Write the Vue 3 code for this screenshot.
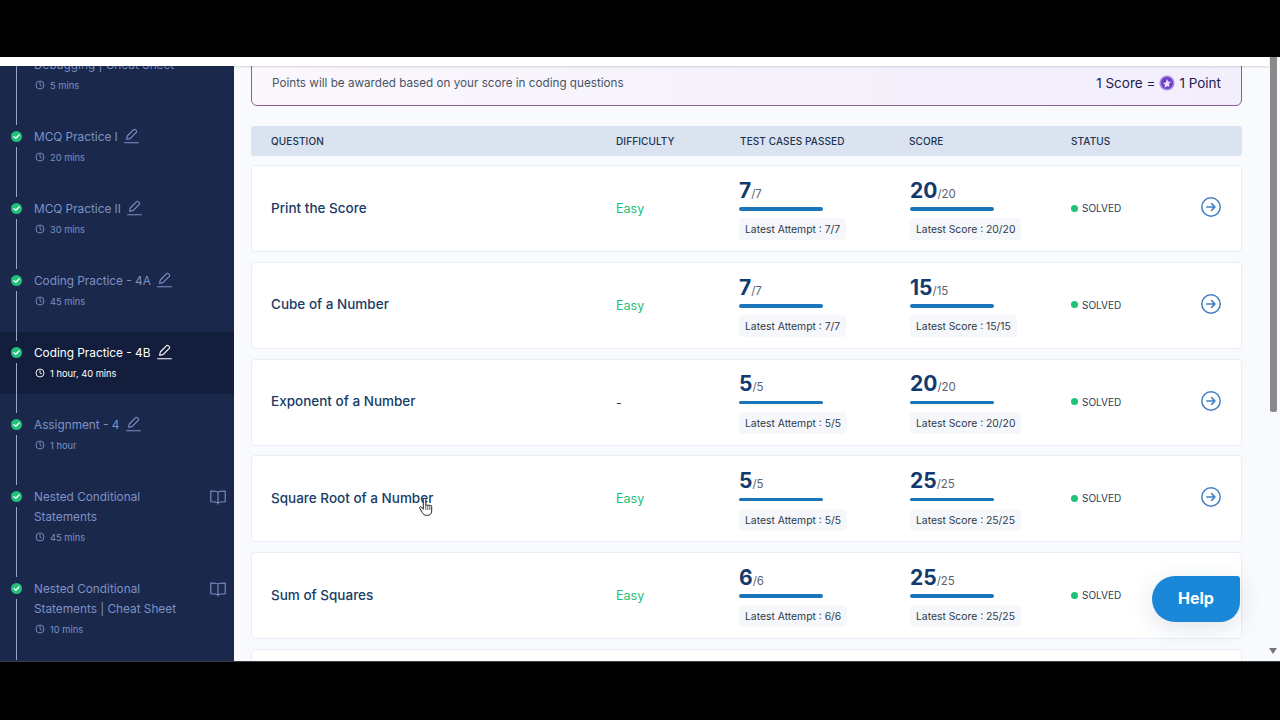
<script setup>
const lessons = [
  { title: 'Debugging | Cheat Sheet', time: '5 mins', icon: 'none' },
  { title: 'MCQ Practice I', time: '20 mins', icon: 'pen' },
  { title: 'MCQ Practice II', time: '30 mins', icon: 'pen' },
  { title: 'Coding Practice - 4A', time: '45 mins', icon: 'pen' },
  { title: 'Coding Practice - 4B', time: '1 hour, 40 mins', icon: 'pen', active: true },
  { title: 'Assignment - 4', time: '1 hour', icon: 'pen' },
  { title: 'Nested Conditional Statements', time: '45 mins', icon: 'book', tall: true },
  { title: 'Nested Conditional Statements | Cheat Sheet', time: '10 mins', icon: 'book', tall: true }
]
const rows = [
  { name: 'Print the Score', diff: 'Easy', tests: 7, score: 20 },
  { name: 'Cube of a Number', diff: 'Easy', tests: 7, score: 15 },
  { name: 'Exponent of a Number', diff: '-', tests: 5, score: 20 },
  { name: 'Square Root of a Number', diff: 'Easy', tests: 5, score: 25 },
  { name: 'Sum of Squares', diff: 'Easy', tests: 6, score: 25 }
]
</script>

<template>
  <div class="page">
    <div class="black top"></div>
    <div class="middle">
      <div class="app">
        <div class="navbar"></div>
        <div class="body">
          <aside class="sidebar">
            <div class="lessons">
              <div
                v-for="l in lessons"
                :key="l.title"
                class="lesson"
                :class="{ active: l.active, tall: l.tall }"
              >
                <div class="rail">
                  <span class="seg first"></span>
                  <svg class="dot" viewBox="0 0 12 12">
                    <circle cx="6" cy="6" r="6" fill="#22c07a" />
                    <path d="M3.3 6.2 5.2 8 8.8 4.3" fill="none" stroke="#fff" stroke-width="1.5" stroke-linecap="round" stroke-linejoin="round" />
                  </svg>
                  <span class="seg rest"></span>
                </div>
                <div class="info">
                  <div class="title-line">
                    <span class="l-title">{{ l.title }}</span>
                    <svg v-if="l.icon === 'pen'" class="pen" viewBox="0 0 15 16" fill="none" stroke="currentColor" stroke-width="1.1">
                      <path d="M2.6 11.3 3.3 8 9.6 1.6a1.1 1.1 0 0 1 1.6 0l1.1 1.1a1.1 1.1 0 0 1 0 1.6L6 10.6z" stroke-linejoin="round" />
                      <path d="M.6 14.7h13.8" stroke-linecap="round" />
                    </svg>
                  </div>
                  <div class="time">
                    <svg class="clock" viewBox="0 0 10 10" fill="none" stroke="currentColor" stroke-width=".9">
                      <circle cx="5" cy="5" r="4" />
                      <path d="M5 2.7V5l1.6 1" stroke-linecap="round" stroke-linejoin="round" />
                    </svg>
                    <span>{{ l.time }}</span>
                  </div>
                </div>
                <svg v-if="l.icon === 'book'" class="book" viewBox="0 0 16 15" fill="none" stroke="currentColor" stroke-width="1.1">
                  <path d="M8 2.2C6.8 1.2 4 1 .8 1v10.8c3.2 0 5.8.2 7.2 1.2 1.4-1 4-1.2 7.2-1.2V1C12 1 9.2 1.2 8 2.2zM8 2.2V14.4" stroke-linejoin="round" />
                </svg>
              </div>
            </div>
          </aside>

          <main class="content">
            <div class="banner">
              <span class="banner-text">Points will be awarded based on your score in coding questions</span>
              <span class="rate">
                1 Score =
                <svg class="coin" viewBox="0 0 16 16">
                  <circle cx="8" cy="8" r="7.6" fill="#a98be0" />
                  <circle cx="8" cy="8" r="6" fill="#6d3fc4" />
                  <path d="m8 3.9 1.25 2.6 2.85.38-2.08 1.97.52 2.82L8 11.3l-2.54 1.37.52-2.82L3.9 7.88l2.85-.38z" fill="#e9defa" />
                </svg>
                1 Point
              </span>
            </div>

            <div class="t-head grid">
              <span class="q-col">QUESTION</span>
              <span>DIFFICULTY</span>
              <span>TEST CASES PASSED</span>
              <span>SCORE</span>
              <span>STATUS</span>
              <span></span>
            </div>

            <div v-for="r in rows" :key="r.name" class="t-row grid">
              <span class="q-col q-name">{{ r.name }}</span>
              <span class="diff" :class="{ none: r.diff === '-' }">{{ r.diff }}</span>
              <div class="metric">
                <div class="nums"><b>{{ r.tests }}</b><span>/{{ r.tests }}</span></div>
                <div class="bar"></div>
                <div class="pill">Latest Attempt : {{ r.tests }}/{{ r.tests }}</div>
              </div>
              <div class="metric">
                <div class="nums"><b>{{ r.score }}</b><span>/{{ r.score }}</span></div>
                <div class="bar"></div>
                <div class="pill">Latest Score : {{ r.score }}/{{ r.score }}</div>
              </div>
              <div class="status"><i></i>SOLVED</div>
              <svg class="go" viewBox="0 0 20 20" fill="none" stroke="#3f7fc0" stroke-width="1.5">
                <circle cx="10" cy="10" r="9.2" />
                <path d="M5.8 10h8M10.6 6.6 14 10l-3.4 3.4" stroke-linecap="round" stroke-linejoin="round" />
              </svg>
            </div>
            <div class="t-row"></div>

            <button class="help">Help</button>
            <svg class="cursor" viewBox="0 0 14 20">
              <path d="M4.3 12.2 2.4 10c-.9-1-2.3.1-1.6 1.3l2.6 4.4c.8 1.5 2 2.6 4 2.6h1.4c2.4 0 3.9-1.7 3.9-4.2V9.4c0-1.3-1.7-1.4-1.9-.2 0-1.4-1.8-1.6-2-.3 0-1.4-1.9-1.5-2-.2V2.5c0-1.5-2.5-1.5-2.5 0z" fill="#fff" stroke="#222" stroke-width="1" stroke-linejoin="round" />
              <path d="M6.8 9v4M8.8 9v4M10.8 9.3V13" stroke="#222" stroke-width=".7" fill="none" />
            </svg>
          </main>
        </div>
      </div>
      <div class="scrollbar">
        <div class="thumb"></div>
        <div class="down"></div>
      </div>
    </div>
    <div class="black bottom"></div>
  </div>
</template>

<style scoped>
.page {
  width: 1280px;
  height: 720px;
  display: flex;
  flex-direction: column;
  overflow: hidden;
  font-family: Inter, "Noto Sans", sans-serif;
  background: #000;
}
.black { background: #000; flex: none; }
.top { height: 57px; }
.bottom { height: 59px; border-top: 1px solid #3a3f45; box-sizing: border-box; }
.middle { flex: 1; display: flex; min-height: 0; }
.app { flex: 1; display: flex; flex-direction: column; min-width: 0; }
.navbar {
  height: 9px;
  flex: none;
  background: #fff;
  box-shadow: 0 1px 2px rgba(40, 50, 70, 0.18);
  position: relative;
  z-index: 2;
}
.body { flex: 1; display: flex; min-height: 0; }

.sidebar {
  width: 234px;
  flex: none;
  background: #19284b;
  overflow: hidden;
}
.lessons { margin-top: -22px; }
.lesson {
  display: flex;
  height: 72px;
  color: #7f91c6;
}
.lesson.tall { height: 92px; }
.lesson.active {
  color: #fff;
  background: linear-gradient(#131e3c 0 62px, transparent 62px);
}
.lesson:first-child .rail { margin-top: -14px; }
.rail {
  width: 33px;
  flex: none;
  display: flex;
  flex-direction: column;
  align-items: center;
}
.seg { width: 1.5px; background: #97a5cc; }
.seg.first { height: 9px; margin-bottom: 6px; }
.seg.rest { flex: 1; margin-top: 5px; }
.dot { width: 11px; height: 11px; flex: none; }
.info { flex: 1; min-width: 0; padding: 11px 0 0 1px; }
.title-line { font-size: 11.8px; line-height: 20px; width: 160px; }
.active .title-line, .lesson:not(.tall) .title-line { width: auto; display: flex; align-items: center; }
.pen { width: 15px; height: 16px; margin-left: 6.5px; margin-top: -2px; flex: none; }
.time {
  display: flex;
  align-items: center;
  gap: 5px;
  margin-top: 2px;
  height: 16px;
  font-size: 9.3px;
}
.clock { width: 10px; height: 10px; flex: none; margin-left: 1px; }
.book { width: 16px; height: 15px; margin: 14px 8px 0 0; flex: none; }

.content {
  flex: 1;
  min-width: 0;
  position: relative;
  overflow: hidden;
  background: #f8fafd;
  padding: 0 27px 0 17px;
}
.banner {
  margin-top: -10px;
  height: 50px;
  box-sizing: border-box;
  padding: 4px 20px 0;
  border: 1px solid #8b5e96;
  border-radius: 6px;
  background: linear-gradient(90deg, #fbf7fc, #f2eefc);
  display: flex;
  align-items: center;
  justify-content: space-between;
}
.banner-text { font-size: 11.7px; color: #475467; }
.rate {
  font-size: 13.5px;
  color: #1d1c4f;
  display: flex;
  align-items: center;
  gap: 4px;
}
.coin { width: 16px; height: 16px; }

.grid { display: grid; align-items: center; }
.t-head {
  grid-template-columns: 365px 124px 169px 162px 130px 1fr;
  margin-top: 20px;
  height: 30px;
  margin-bottom: 9px;
  background: #dbe3f0;
  border-radius: 3px;
  font-size: 10px;
  font-weight: 500;
  color: #1b3352;
  letter-spacing: 0.1px;
}
.t-head .q-col { padding-left: 20px; }
.t-row {
  height: 87px;
  box-sizing: border-box;
  margin-bottom: 9.8px;
  background: #fff;
  border: 1px solid #e8eef5;
  border-radius: 4px;
  grid-template-columns: 364px 123px 171px 161px 130px 20px;
}
.q-name { padding-left: 19px; margin-top: -2px; font-size: 13.5px; font-weight: 500; color: #183b66; }
.diff { font-size: 12.5px; color: #22c07a; }
.diff.none { color: #2a3a52; }
.metric { display: flex; flex-direction: column; align-items: flex-start; margin-top: 2px; }
.nums { height: 24px; line-height: 24px; color: #5c6470; font-size: 11.5px; }
.nums b { font-size: 21px; font-weight: 700; color: #123a6e; }
.bar {
  width: 84px;
  height: 3.5px;
  margin-top: 4.5px;
  border-radius: 2px;
  background: #1b75bb;
}
.pill {
  margin-top: 7.5px;
  height: 22px;
  line-height: 22px;
  padding: 0 6px;
  background: #f5f7fa;
  border-radius: 4px;
  font-size: 10.35px;
  color: #2c3a4a;
}
.status {
  display: flex;
  align-items: center;
  gap: 4px;
  margin-top: -1px;
  font-size: 10px;
  color: #2b3a55;
}
.status i {
  width: 7px;
  height: 7px;
  border-radius: 50%;
  background: #1fc17b;
}
.go { width: 20px; height: 20px; margin-top: -3px; }

.help {
  position: absolute;
  left: 918px;
  top: 510px;
  width: 88px;
  height: 46px;
  border: 0;
  padding: 0 0 2px;
  background: #1a87d8;
  color: #fff;
  font: 700 16px Inter, sans-serif;
  border-radius: 23px 3px 20px 23px;
  box-shadow: 0 6px 24px rgba(30, 60, 100, 0.14);
}
.cursor {
  position: absolute;
  left: 185px;
  top: 431px;
  width: 14px;
  height: 20px;
}

.scrollbar {
  width: 11px;
  flex: none;
  background: #f8fafd;
  position: relative;
}
.thumb {
  width: 7px;
  height: 355px;
  margin-left: 1px;
  background: #8a8a8a;
  border-radius: 0 0 2px 2px;
}
.down {
  position: absolute;
  left: 0;
  bottom: 7px;
  width: 0;
  height: 0;
  border-left: 4.5px solid transparent;
  border-right: 4.5px solid transparent;
  border-top: 6px solid #777;
}
</style>
